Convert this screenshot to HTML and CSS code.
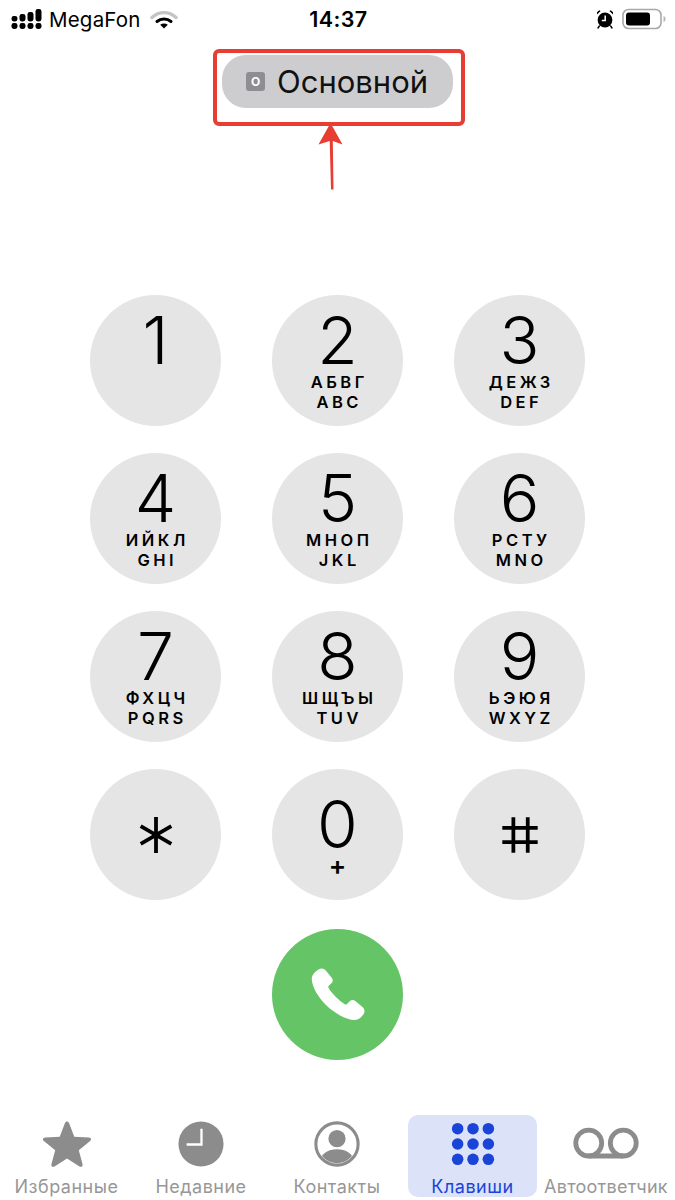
FILE: index.html
```html
<!DOCTYPE html>
<html lang="ru">
<head>
<meta charset="utf-8">
<title>Телефон</title>
<link rel="stylesheet" href="styles.css">
</head>
<body>
<div class="phone">
  <header class="status">
    <div class="status-left">
      <svg class="signal" width="32" height="22" viewBox="0 0 32 22" fill="#000">
        <rect x="0.500" y="8" width="6" height="5.500" rx="2.400"/><rect x="0.500" y="15" width="6" height="6" rx="2.400"/>
        <rect x="8.500" y="6" width="6" height="7.500" rx="2.400"/><rect x="8.500" y="15" width="6" height="6" rx="2.400"/>
        <rect x="16.500" y="4" width="6" height="9.500" rx="2.400"/><rect x="16.500" y="15" width="6" height="6" rx="2.400"/>
        <rect x="24.500" y="1" width="6" height="12.500" rx="2.400"/><rect x="24.500" y="15" width="6" height="6" rx="2.400"/>
      </svg>
      <span class="carrier">MegaFon</span>
      <svg class="wifi" width="28" height="22" viewBox="0 0 28 22" fill="none" stroke-linecap="round">
        <path d="M2 9.500C9 3 19 3 26 9.500" stroke="#c4c4c4" stroke-width="3.400"/>
        <path d="M7 13.500C11 10.200 17 10.200 21 13.500" stroke="#000" stroke-width="3"/>
        <path d="M14 20.500L10.200 16.800C12.400 15.200 15.600 15.200 17.800 16.800Z" fill="#000"/>
      </svg>
    </div>
    <div class="clock">14:37</div>
    <div class="status-right">
      <svg width="18" height="20" viewBox="0 0 18 20">
        <circle cx="9" cy="11" r="7.400" fill="#000"/>
        <path d="M1 5.500L4.600 2 3.200 1.200 1 3.200ZM17 5.500L13.400 2 14.800 1.200 17 3.200Z" fill="#000"/>
        <path d="M3.400 17L2 19M14.600 17L16 19" stroke="#000" stroke-width="1.400" stroke-linecap="round"/>
        <path d="M9.200 6.500V11.400H5.800" fill="none" stroke="#fff" stroke-width="1.500"/>
      </svg>
      <svg width="44" height="22" viewBox="0 0 44 22">
        <rect x="1" y="1.500" width="38" height="19" rx="5.500" fill="none" stroke="#a8a8a8" stroke-width="1.600"/>
        <rect x="4" y="4.500" width="24" height="13" rx="3" fill="#000"/>
        <path d="M41.500 8C43 8.600 43.500 9.800 43.500 11S43 13.400 41.500 14Z" fill="#b5b5b5"/>
      </svg>
    </div>
  </header>

  <div class="sim-frame">
    <div class="sim-pill">
      <span class="sim-badge">O</span>
      <span class="sim-name">Основной</span>
    </div>
    <svg class="pointer" width="30" height="72" viewBox="0 0 30 72">
      <path d="M13.500 2L1.500 23.500 12.700 20 14 68.500H16.500L15.800 20 25.500 23.500Z" fill="#e83d33"/>
    </svg>
  </div>

  <main class="keypad">
    <button class="key"><span class="digit">1</span></button>
    <button class="key"><span class="digit">2</span><span class="letters">АБВГ</span><span class="letters">ABC</span></button>
    <button class="key"><span class="digit">3</span><span class="letters">ДЕЖЗ</span><span class="letters">DEF</span></button>
    <button class="key"><span class="digit">4</span><span class="letters">ИЙКЛ</span><span class="letters">GHI</span></button>
    <button class="key"><span class="digit">5</span><span class="letters">МНОП</span><span class="letters">JKL</span></button>
    <button class="key"><span class="digit">6</span><span class="letters">РСТУ</span><span class="letters">MNO</span></button>
    <button class="key"><span class="digit">7</span><span class="letters">ФХЦЧ</span><span class="letters">PQRS</span></button>
    <button class="key"><span class="digit">8</span><span class="letters">ШЩЪЫ</span><span class="letters">TUV</span></button>
    <button class="key"><span class="digit">9</span><span class="letters">ЬЭЮЯ</span><span class="letters">WXYZ</span></button>
    <button class="key key-symbol"><svg width="38" height="38" viewBox="0 0 36 36" stroke="#000" stroke-width="3.600" fill="none"><path d="M18 1V35M3.500 9.500L32.500 26.500M32.500 9.500L3.500 26.500"/></svg></button>
    <button class="key key-zero"><span class="digit">0</span><span class="letters plus">+</span></button>
    <button class="key key-symbol"><svg width="42" height="42" viewBox="0 0 38 38" stroke="#000" stroke-width="3.400" fill="none"><path d="M13 3V35M26 3V35M3 12.500H35M3 25.500H35"/></svg></button>
    <button class="key key-call">
      <svg width="58" height="58" viewBox="0 0 58 58">
        <path fill="#fff" d="M9.500 3.500C12 1.800 15 2.300 16.800 4.500L22.700 11.700C24.300 13.700 24 15.800 22.500 17.300L19.800 19.800C19.200 20.400 19.100 21.200 19.600 22.100C22.300 27 30.800 35.500 35.700 38.200C36.600 38.700 37.400 38.600 38 38L40.700 35.300C42.200 33.800 44.400 33.500 46.300 35L53.500 41C55.700 42.800 56.200 45.800 54.500 48.300C51.900 52.200 48.300 54.500 44 54C34.500 52.800 23.500 45.500 16.500 38.500C9.500 31.500 3.200 21.500 2.800 13.500C2.600 9.300 5.500 6 9.500 3.500Z"/>
      </svg>
    </button>
  </main>

  <nav class="tabs">
    <div class="tab">
      <svg width="50" height="48" viewBox="0 0 52 50"><path fill="#8c8c8c" d="M26 1.500C27 1.500 27.700 2.200 28.100 3.200L33.600 17.400 48.800 18.200C51 18.300 51.800 20.500 50.100 21.900L38.300 31.400 42.200 46C42.800 48.100 40.900 49.600 39 48.400L26 40.200 13 48.400C11.100 49.600 9.200 48.100 9.800 46L13.700 31.400 1.900 21.900C.2 20.500 1 18.300 3.200 18.200L18.400 17.400 23.900 3.200C24.300 2.200 25 1.500 26 1.500Z"/></svg>
      <span class="tab-label">Избранные</span>
    </div>
    <div class="tab">
      <svg width="48" height="48" viewBox="0 0 50 50"><circle cx="25" cy="25" r="23.500" fill="#8c8c8c"/><path d="M25.500 9V25.500H10" fill="none" stroke="#fff" stroke-width="2.400"/></svg>
      <span class="tab-label">Недавние</span>
    </div>
    <div class="tab">
      <svg width="48" height="48" viewBox="0 0 50 50"><defs><clipPath id="face"><circle cx="25" cy="25" r="20"/></clipPath></defs><circle cx="25" cy="25" r="22" fill="none" stroke="#8c8c8c" stroke-width="3.200"/><circle cx="25" cy="19.500" r="9" fill="#8c8c8c"/><ellipse cx="25" cy="42" rx="17" ry="11.500" fill="#8c8c8c" clip-path="url(#face)"/></svg>
      <span class="tab-label">Контакты</span>
    </div>
    <div class="tab tab-active">
      <svg width="48" height="48" viewBox="0 0 50 50" fill="#1a44d8">
        <circle cx="9" cy="9" r="6"/><circle cx="25" cy="9" r="6"/><circle cx="41" cy="9" r="6"/>
        <circle cx="9" cy="25" r="6"/><circle cx="25" cy="25" r="6"/><circle cx="41" cy="25" r="6"/>
        <circle cx="9" cy="41" r="6"/><circle cx="25" cy="41" r="6"/><circle cx="41" cy="41" r="6"/>
      </svg>
      <span class="tab-label">Клавиши</span>
    </div>
    <div class="tab">
      <svg width="70" height="48" viewBox="0 0 70 50" fill="none" stroke="#8c8c8c" stroke-width="5"><circle cx="17" cy="24" r="13.500"/><circle cx="53" cy="24" r="13.500"/><path d="M17 37.500H53"/></svg>
      <span class="tab-label">Автоответчик</span>
    </div>
  </nav>
</div>
</body>
</html>
```
FILE: styles.css
```css
* { box-sizing: border-box; }

html, body {
  margin: 0;
  background: #fff;
}

.phone {
  width: 675px;
  height: 1200px;
  display: flex;
  flex-direction: column;
  overflow: hidden;
  font-family: Inter, "Liberation Sans", sans-serif;
  color: #000;
}

/* Status bar */
.status {
  height: 38px;
  display: grid;
  grid-template-columns: 1fr auto 1fr;
  align-items: center;
  padding: 0 9px 0 11px;
}

.status-left {
  display: flex;
  align-items: center;
}

.carrier {
  font-size: 20.500px;
  margin-left: 6px;
  letter-spacing: 0.2px;
}

.wifi { margin-left: 9px; }

.clock {
  font-size: 21.500px;
  font-weight: 600;
  letter-spacing: 0.4px;
}

.status-right {
  display: flex;
  align-items: center;
  justify-content: flex-end;
  gap: 8px;
}

/* Selected line */
.sim-frame {
  position: relative;
  width: 252px;
  height: 77px;
  margin: 11px 0 0 213px;
  padding: 2px 0 0 5px;
  border: 4px solid #e83d33;
  border-radius: 6px;
}

.sim-pill {
  width: 231px;
  height: 53px;
  display: flex;
  align-items: center;
  padding-left: 24px;
  background: #cdcdd0;
  border-radius: 24px;
}

.sim-badge {
  width: 19px;
  height: 19px;
  display: flex;
  align-items: center;
  justify-content: center;
  background: #8e8e92;
  border-radius: 3px;
  color: #fff;
  font-size: 12px;
  font-weight: 700;
}

.sim-name {
  margin-left: 12px;
  font-size: 31px;
  color: #111;
}

.pointer {
  position: absolute;
  left: 100px;
  top: 68px;
}

/* Dial pad */
.keypad {
  display: grid;
  grid-template-columns: repeat(3, 131px);
  grid-auto-rows: 131px;
  column-gap: 51px;
  row-gap: 27px;
  margin: 169px 0 0 90px;
}

.key {
  display: flex;
  flex-direction: column;
  align-items: center;
  padding: 12px 0 0;
  border: 0;
  border-radius: 50%;
  background: #e5e5e5;
  color: #000;
  font-family: inherit;
}

.digit {
  font-size: 66px;
  font-weight: 300;
  line-height: 66px;
}

.letters {
  font-size: 16.500px;
  font-weight: 600;
  letter-spacing: 3.500px;
  margin-right: -3.500px;
  line-height: 20px;
}

.digit + .letters { margin-top: -1px; }

.key-zero { padding-top: 22px; }

.key-zero .plus {
  font-size: 26px;
  font-weight: 600;
  line-height: 14px;
  letter-spacing: 0;
  margin: 2px 0 0;
}

.key-symbol {
  justify-content: center;
  padding: 0;
}

.key-call {
  grid-column: 2;
  height: 131px;
  justify-content: center;
  padding: 0;
  margin-top: 2px;
  background: #65c466;
}

/* Tab bar */
.tabs {
  display: grid;
  grid-template-columns: 133px 136px 136px 132px 138px;
  margin-top: 57px;
  align-items: stretch;
}

.tab {
  height: 82px;
  display: flex;
  flex-direction: column;
  align-items: center;
  padding-top: 5px;
  border-radius: 10px;
}

.tab svg { flex: none; }

.tab-label {
  font-size: 18px;
  line-height: 20px;
  letter-spacing: 0.5px;
  white-space: nowrap;
  color: #979797;
  margin-top: 9px;
}

.tab:last-child .tab-label { letter-spacing: 0.25px; }

.tab-active {
  margin-left: 3px;
  background: #dce2f7;
}

.tab-active .tab-label { color: #1a44d8; }
```
